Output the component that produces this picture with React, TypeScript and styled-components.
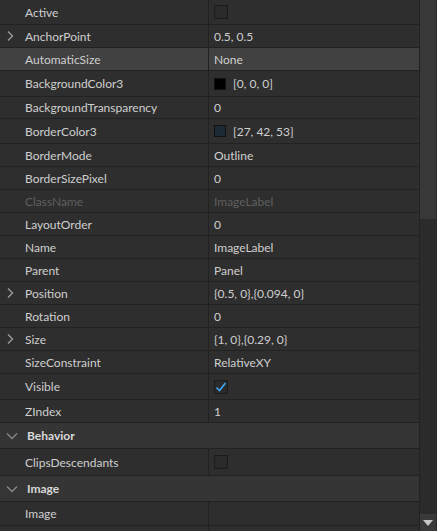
import styled, { createGlobalStyle } from "styled-components";

const GlobalStyle = createGlobalStyle`
  html, body {
    margin: 0;
    padding: 0;
    background: #2e2e2e;
  }
  body {
    font-family: Lato, "Noto Sans", sans-serif;
    font-size: 12px;
    color: #cfcfcf;
  }
`;

const Panel = styled.div`
  width: 437px;
  height: 531px;
  display: flex;
  overflow: hidden;
  background: #2e2e2e;
`;

const List = styled.div`
  flex: 1;
  display: flex;
  flex-direction: column;
`;

const Row = styled.div<{ $h: number; $hover?: boolean }>`
  flex: none;
  height: ${(p) => p.$h}px;
  box-sizing: border-box;
  display: grid;
  grid-template-columns: 209px 1fr;
  border-bottom: 1px solid #222222;
  background: ${(p) => (p.$hover ? "#414141" : "#2e2e2e")};
`;

const NameCell = styled.div<{ $disabled?: boolean }>`
  position: relative;
  display: flex;
  align-items: center;
  padding-left: 25px;
  border-right: 1px solid #222222;
  color: ${(p) => (p.$disabled ? "#5f5f5f" : "#cfcfcf")};
  white-space: nowrap;
`;

const ValueCell = styled.div<{ $disabled?: boolean }>`
  display: flex;
  align-items: center;
  gap: 7px;
  padding-left: 5px;
  color: ${(p) => (p.$disabled ? "#5f5f5f" : "#cfcfcf")};
  white-space: nowrap;
`;

const Expander = styled.span`
  position: absolute;
  left: 6px;
  top: 50%;
  transform: translateY(-50%);
  display: flex;
`;

const SectionRow = styled.div<{ $h: number }>`
  flex: none;
  height: ${(p) => p.$h}px;
  box-sizing: border-box;
  display: flex;
  align-items: center;
  gap: 8px;
  padding-left: 5px;
  background: #353535;
  border-bottom: 1px solid #222222;
  font-weight: 700;
  color: #d8d8d8;
`;

const Checkbox = styled.span`
  width: 14px;
  height: 14px;
  box-sizing: border-box;
  background: #2a2a2a;
  border: 1px solid #1b1b1b;
  display: flex;
  align-items: center;
  justify-content: center;
`;

const Swatch = styled.span<{ $color: string }>`
  width: 12px;
  height: 12px;
  box-sizing: border-box;
  background: ${(p) => p.$color};
  border: 1px solid #111111;
`;

const Scrollbar = styled.div`
  width: 18px;
  flex: none;
  display: flex;
  flex-direction: column;
  background: #2b2b2b;
  border-left: 1px solid #222222;
  box-sizing: border-box;
`;

const Thumb = styled.div`
  height: 219px;
  background: #383838;
  margin-right: 1px;
`;

const Track = styled.div`
  flex: 1;
`;

const ArrowButton = styled.div`
  height: 17px;
  margin-right: 1px;
  background: #3a3a3a;
  display: flex;
  align-items: center;
  justify-content: center;
`;

const ChevronRight = () => (
  <svg width="8" height="12" viewBox="0 0 8 12">
    <path d="M2 1.5l4.5 4.5-4.5 4.5" stroke="#9a9a9a" strokeWidth="1.4" fill="none" />
  </svg>
);

const ChevronDown = () => (
  <svg width="14" height="8" viewBox="0 0 14 8">
    <path d="M2 1.5l5 5 5-5" stroke="#8a8a8a" strokeWidth="1.3" fill="none" />
  </svg>
);

const Check = () => (
  <svg width="12" height="12" viewBox="0 0 12 12">
    <path d="M1.5 6.5l3 3 6-7.5" stroke="#3fa9f5" strokeWidth="1.6" fill="none" />
  </svg>
);

type Value =
  | { kind: "text"; text: string }
  | { kind: "check"; on: boolean }
  | { kind: "color"; color: string; text: string };

type Item =
  | {
      type: "prop";
      name: string;
      value: Value;
      h: number;
      expand?: boolean;
      hover?: boolean;
      disabled?: boolean;
    }
  | { type: "section"; name: string; h: number };

const t = (text: string): Value => ({ kind: "text", text });

const items: Item[] = [
  { type: "prop", name: "Active", value: { kind: "check", on: false }, h: 25 },
  { type: "prop", name: "AnchorPoint", value: t("0.5, 0.5"), h: 23, expand: true },
  { type: "prop", name: "AutomaticSize", value: t("None"), h: 23, hover: true },
  {
    type: "prop",
    name: "BackgroundColor3",
    value: { kind: "color", color: "#000000", text: "[0, 0, 0]" },
    h: 26,
  },
  { type: "prop", name: "BackgroundTransparency", value: t("0"), h: 22 },
  {
    type: "prop",
    name: "BorderColor3",
    value: { kind: "color", color: "#1b2a35", text: "[27, 42, 53]" },
    h: 25,
  },
  { type: "prop", name: "BorderMode", value: t("Outline"), h: 23 },
  { type: "prop", name: "BorderSizePixel", value: t("0"), h: 23 },
  { type: "prop", name: "ClassName", value: t("ImageLabel"), h: 23, disabled: true },
  { type: "prop", name: "LayoutOrder", value: t("0"), h: 23 },
  { type: "prop", name: "Name", value: t("ImageLabel"), h: 23 },
  { type: "prop", name: "Parent", value: t("Panel"), h: 23 },
  { type: "prop", name: "Position", value: t("{0.5, 0},{0.094, 0}"), h: 23, expand: true },
  { type: "prop", name: "Rotation", value: t("0"), h: 23 },
  { type: "prop", name: "Size", value: t("{1, 0},{0.29, 0}"), h: 23, expand: true },
  { type: "prop", name: "SizeConstraint", value: t("RelativeXY"), h: 23 },
  { type: "prop", name: "Visible", value: { kind: "check", on: true }, h: 26 },
  { type: "prop", name: "ZIndex", value: t("1"), h: 23 },
  { type: "section", name: "Behavior", h: 26 },
  { type: "prop", name: "ClipsDescendants", value: { kind: "check", on: false }, h: 27 },
  { type: "section", name: "Image", h: 26 },
  { type: "prop", name: "Image", value: t(""), h: 24 },
  { type: "prop", name: "", value: t(""), h: 24 },
];

const renderValue = (v: Value) => {
  if (v.kind === "check") return <Checkbox>{v.on && <Check />}</Checkbox>;
  if (v.kind === "color")
    return (
      <>
        <Swatch $color={v.color} />
        <span>{v.text}</span>
      </>
    );
  return <span>{v.text}</span>;
};

export default function App() {
  return (
    <Panel>
      <GlobalStyle />
      <List>
        {items.map((item, i) =>
          item.type === "section" ? (
            <SectionRow key={i} $h={item.h}>
              <ChevronDown />
              <span>{item.name}</span>
            </SectionRow>
          ) : (
            <Row key={i} $h={item.h} $hover={item.hover}>
              <NameCell $disabled={item.disabled}>
                {item.expand && (
                  <Expander>
                    <ChevronRight />
                  </Expander>
                )}
                {item.name}
              </NameCell>
              <ValueCell $disabled={item.disabled}>{renderValue(item.value)}</ValueCell>
            </Row>
          )
        )}
      </List>
      <Scrollbar>
        <Thumb />
        <Track />
        <ArrowButton>
          <svg width="10" height="6" viewBox="0 0 10 6">
            <path d="M0 0h10L5 6z" fill="#c8c8c8" />
          </svg>
        </ArrowButton>
      </Scrollbar>
    </Panel>
  );
}
